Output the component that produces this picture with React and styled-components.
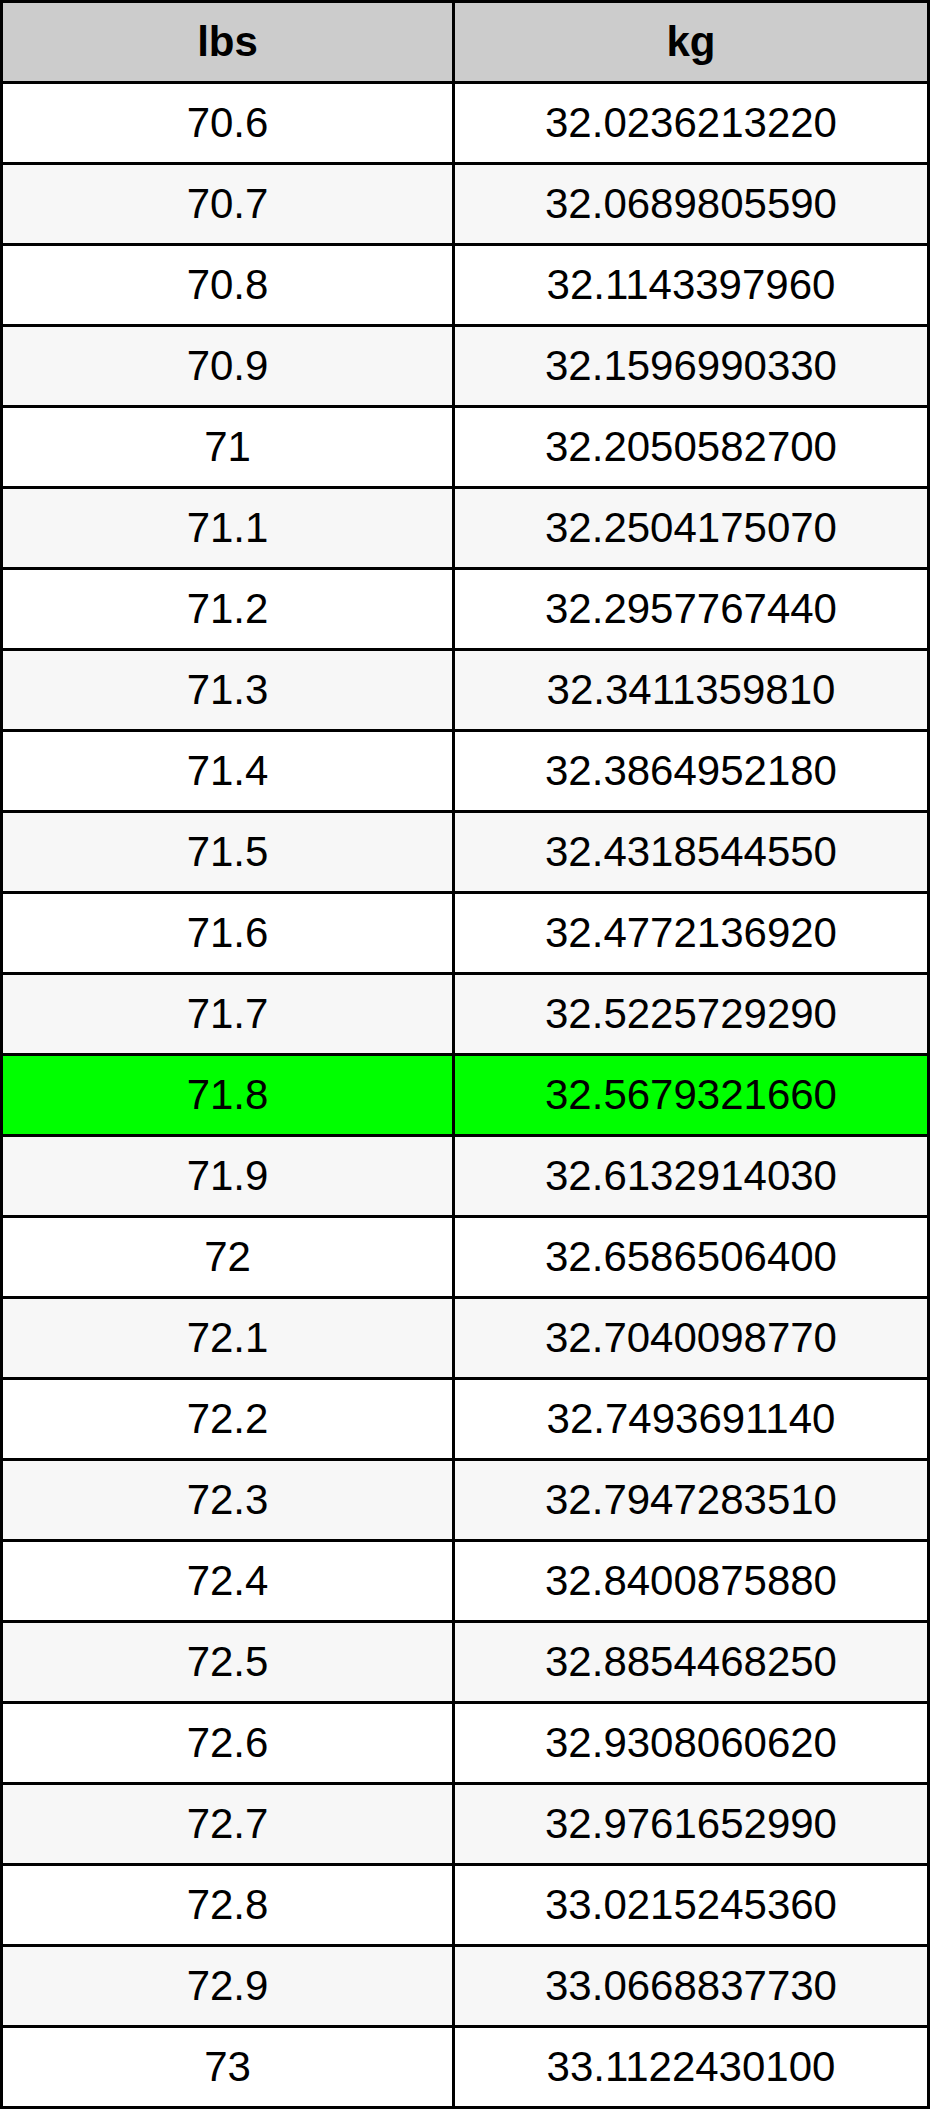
import React from "react";
import styled, { createGlobalStyle } from "styled-components";

const Global = createGlobalStyle`
  html, body { margin: 0; padding: 0; background: #ffffff; }
  body { font-family: "Liberation Sans", Arial, sans-serif; }
`;

const Table = styled.table`
  width: 930px;
  border-collapse: collapse;
  table-layout: fixed;
  font-family: "Liberation Sans", Arial, sans-serif;
  color: #000;
`;

const HeadCell = styled.th`
  height: 78px;
  padding: 0;
  border: 3px solid #000;
  background: #cccccc;
  font-size: 42px;
  font-weight: bold;
  text-align: center;
  vertical-align: middle;
`;

const Row = styled.tr`
  background: ${(p) => (p.$highlight ? "#00ff00" : p.$alt ? "#f7f7f7" : "#ffffff")};
`;

const Cell = styled.td`
  height: 78px;
  padding: 0;
  border: 3px solid #000;
  font-size: 42px;
  text-align: center;
  vertical-align: middle;
`;

const rows = [
  ["70.6", "32.0236213220"],
  ["70.7", "32.0689805590"],
  ["70.8", "32.1143397960"],
  ["70.9", "32.1596990330"],
  ["71", "32.2050582700"],
  ["71.1", "32.2504175070"],
  ["71.2", "32.2957767440"],
  ["71.3", "32.3411359810"],
  ["71.4", "32.3864952180"],
  ["71.5", "32.4318544550"],
  ["71.6", "32.4772136920"],
  ["71.7", "32.5225729290"],
  ["71.8", "32.5679321660"],
  ["71.9", "32.6132914030"],
  ["72", "32.6586506400"],
  ["72.1", "32.7040098770"],
  ["72.2", "32.7493691140"],
  ["72.3", "32.7947283510"],
  ["72.4", "32.8400875880"],
  ["72.5", "32.8854468250"],
  ["72.6", "32.9308060620"],
  ["72.7", "32.9761652990"],
  ["72.8", "33.0215245360"],
  ["72.9", "33.0668837730"],
  ["73", "33.1122430100"],
];

export default function App() {
  return (
    <>
      <Global />
      <Table>
        <colgroup>
          <col style={{ width: "452px" }} />
          <col />
        </colgroup>
        <thead>
          <tr>
            <HeadCell>lbs</HeadCell>
            <HeadCell>kg</HeadCell>
          </tr>
        </thead>
        <tbody>
          {rows.map(([lbs, kg], i) => (
            <Row key={lbs} $alt={i % 2 === 1} $highlight={lbs === "71.8"}>
              <Cell>{lbs}</Cell>
              <Cell>{kg}</Cell>
            </Row>
          ))}
        </tbody>
      </Table>
    </>
  );
}
